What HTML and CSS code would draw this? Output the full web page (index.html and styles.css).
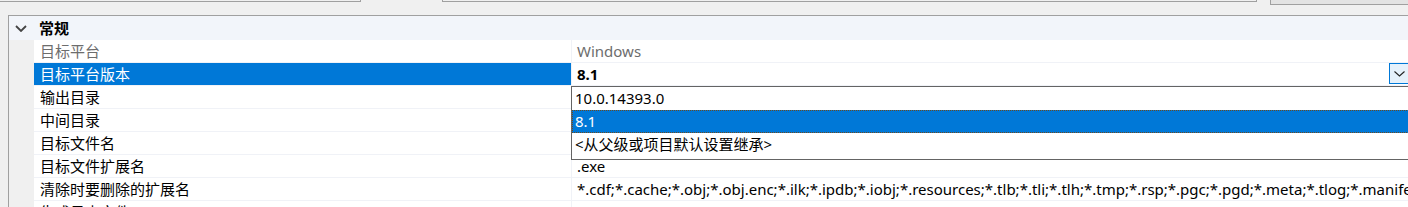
FILE: index.html
```html
<!DOCTYPE html>
<html lang="zh-CN">
<head>
    <meta charset="UTF-8">
    <title>常规属性</title>
    <link rel="stylesheet" href="styles.css">
</head>
<body>
    <div class="tabs">
        <div class="tab tab-a"></div>
        <div class="tab tab-b"></div>
        <div class="tab tab-c"></div>
    </div>
    <div class="grid">
        <div class="category">
            <div class="gutter">
                <svg class="toggle" width="12" height="7" viewBox="0 0 12 7"><path d="M1 1 L6 6 L11 1" fill="none" stroke="#444" stroke-width="1.8"/></svg>
            </div>
            <div class="cat-name">常规</div>
        </div>
        <div class="row readonly">
            <div class="gutter"></div>
            <div class="name">目标平台</div>
            <div class="value">Windows</div>
        </div>
        <div class="row selected">
            <div class="gutter"></div>
            <div class="name">目标平台版本</div>
            <div class="value">
                <span class="text strong">8.1</span>
                <span class="drop-btn">
                    <svg width="11" height="6" viewBox="0 0 11 6"><path d="M0.5 0.5 L5.5 5 L10.5 0.5" fill="none" stroke="#222" stroke-width="1.1"/></svg>
                </span>
            </div>
        </div>
        <div class="row">
            <div class="gutter"></div>
            <div class="name">输出目录</div>
            <div class="value"></div>
        </div>
        <div class="row">
            <div class="gutter"></div>
            <div class="name">中间目录</div>
            <div class="value"></div>
        </div>
        <div class="row">
            <div class="gutter"></div>
            <div class="name">目标文件名</div>
            <div class="value"></div>
        </div>
        <div class="row">
            <div class="gutter"></div>
            <div class="name">目标文件扩展名</div>
            <div class="value">.exe</div>
        </div>
        <div class="row">
            <div class="gutter"></div>
            <div class="name">清除时要删除的扩展名</div>
            <div class="value">*.cdf;*.cache;*.obj;*.obj.enc;*.ilk;*.ipdb;*.iobj;*.resources;*.tlb;*.tli;*.tlh;*.tmp;*.rsp;*.pgc;*.pgd;*.meta;*.tlog;*.manifest;*.res;*.pch;*.exp;*.idb;*.rep;*.xdc;*.pdb;*_manifest.rc;*.bsc;*.sbr;*.xml;*.metagen;*.bi</div>
        </div>
        <div class="row">
            <div class="gutter"></div>
            <div class="name">生成日志文件</div>
            <div class="value">$(IntDir)$(MSBuildProjectName).log</div>
        </div>

        <!-- 下拉列表 -->
        <div class="dropdown">
            <div class="option">10.0.14393.0</div>
            <div class="option active">8.1</div>
            <div class="option">&lt;从父级或项目默认设置继承&gt;</div>
        </div>
    </div>
</body>
</html>
```

FILE: styles.css
```css
body {
    margin: 0;
    height: 207px;
    overflow: hidden;
    background-color: #f0f0f0;
    font-family: "Segoe UI", "Noto Sans", "Noto Sans CJK SC", sans-serif;
    font-size: 15px;
    color: #000;
}

/* 顶部 */
.tabs {
    display: flex;
    align-items: flex-start;
    height: 15px;
}
.tab {
    box-sizing: border-box;
    border: 1px solid #a0a0a0;
    border-top: none;
}
.tab-a {
    width: 361px;
    height: 2px;
    border-left: none;
}
.tab-b {
    width: 815px;
    height: 2px;
    margin-left: 81px;
}
.tab-c {
    flex: 1;
    height: 5px;
    margin-left: 13px;
    border-right: none;
    background-color: #e3e3e3;
}

/* 属性表 */
.grid {
    position: relative;
    margin-left: 8px;
    border-top: 1px solid #a0a0a0;
    border-left: 1px solid #a0a0a0;
    height: 191px;
    overflow: hidden;
}
.gutter {
    width: 25px;
    flex-shrink: 0;
    background-color: #f0f0f0;
}
.category {
    display: flex;
    height: 24px;
    background-color: #f2f5fa;
}
.category .gutter {
    display: flex;
    align-items: center;
    padding-left: 6px;
    box-sizing: border-box;
    background-color: #f2f5fa;
}
.cat-name {
    font-weight: bold;
    line-height: 24px;
    padding-left: 5px;
}
.row {
    display: flex;
    height: 23px;
    line-height: 22px;
}
.row .name {
    width: 537px;
    flex-shrink: 0;
    box-sizing: border-box;
    padding-left: 6px;
    background-color: #fff;
    border-bottom: 1px solid #f0f2f7;
    white-space: nowrap;
}
.row .value {
    flex: 1;
    display: flex;
    min-width: 0;
    padding-left: 5px;
    background-color: #fff;
    border-left: 1px solid #f0f2f7;
    border-bottom: 1px solid #f0f2f7;
    white-space: nowrap;
    overflow: hidden;
}
.readonly .name,
.readonly .value {
    color: #6d6d6d;
}
.selected .name {
    background-color: #0078d7;
    color: #fff;
}
.selected .value .text {
    flex: 1;
}
.strong {
    font-weight: bold;
}
.drop-btn {
    display: flex;
    align-items: center;
    justify-content: center;
    width: 21px;
    height: 21px;
    box-sizing: border-box;
    border: 1px solid #0078d7;
    background-color: #e5f1fb;
    margin-right: -2px;
}

/* 下拉列表 */
.dropdown {
    position: absolute;
    top: 70px;
    left: 562px;
    right: -2px;
    height: 74px;
    box-sizing: border-box;
    border: 1px solid #646464;
    background-color: #fff;
}
.option {
    height: 23px;
    line-height: 22px;
    padding-left: 3px;
    box-sizing: border-box;
    white-space: nowrap;
}
.option.active {
    background-color: #0078d7;
    color: #fff;
    outline: 1px dotted #6a4a20;
    outline-offset: -1px;
}
```
